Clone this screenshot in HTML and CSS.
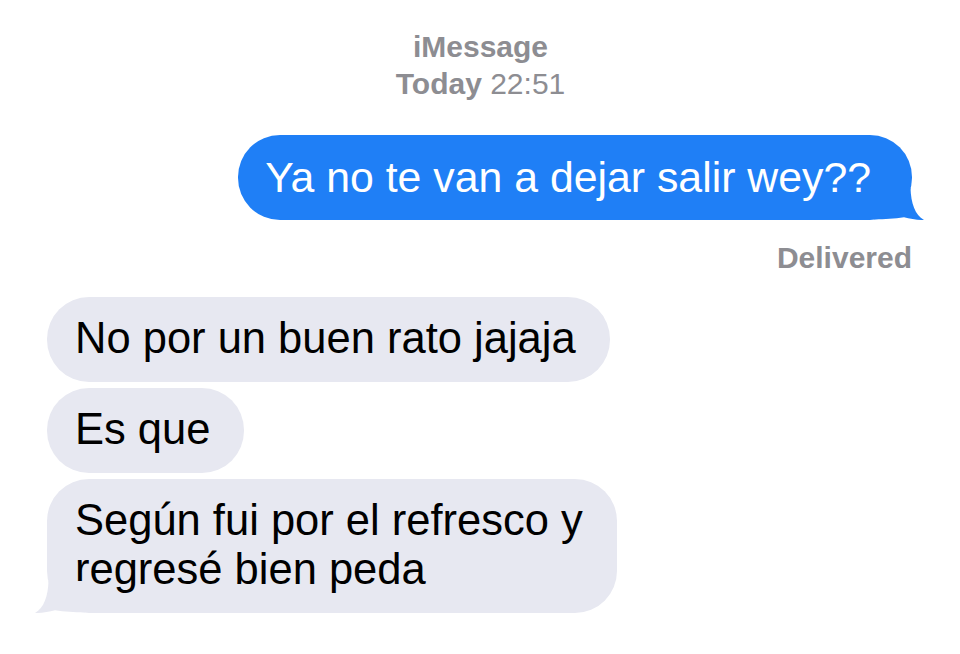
FILE: index.html
```html
<!DOCTYPE html>
<html lang="es">
<head>
<meta charset="utf-8">
<title>iMessage</title>
<link rel="stylesheet" href="styles.css">
</head>
<body>
<main class="thread">
  <header class="meta">
    <div class="service">iMessage</div>
    <div class="stamp"><span class="day">Today</span> 22:51</div>
  </header>
  <div class="bubble sent">Ya no te van a dejar salir wey??<svg class="tail tail-sent" viewBox="0 0 50 32" width="50" height="32" aria-hidden="true"><path d="M36.5,0 C37,15 41,27 50,32 C44,32.2 36,30.8 30,29.2 C20,30.6 9,31.4 0,31.3 L0,0 Z"/></svg></div>
  <div class="delivered">Delivered</div>
  <div class="received-group">
    <div class="bubble received">No por un buen rato jajaja</div>
    <div class="bubble received">Es que</div>
    <div class="bubble received">Según fui por el refresco y<br>regresé bien peda<svg class="tail tail-received" viewBox="0 0 50 32" width="50" height="32" aria-hidden="true"><path d="M36.5,0 C37,15 41,27 50,32 C44,32.2 36,30.8 30,29.2 C20,30.6 9,31.4 0,31.3 L0,0 Z"/></svg></div>
  </div>
</main>
</body>
</html>
```
FILE: styles.css
```css
html, body {
  margin: 0;
  padding: 0;
  background: #ffffff;
}
body {
  font-family: "Liberation Sans", Arial, Helvetica, sans-serif;
}
.thread {
  display: flex;
  flex-direction: column;
  padding: 28px 48px 0 47px;
}
.meta {
  text-align: center;
  color: #8d8d92;
  font-size: 30px;
  line-height: 37px;
  font-weight: 700;
  padding-left: 2px;
}
.stamp {
  font-weight: 400;
}
.stamp .day {
  font-weight: 700;
}
.bubble {
  position: relative;
  font-size: 43.5px;
  line-height: 49px;
  border-radius: 42px;
  padding: 18px 34px 18px 28px;
}
.sent {
  align-self: flex-end;
  margin-top: 33px;
  background: #1f7ff6;
  color: #ffffff;
  font-size: 42.8px;
  padding-left: 27px;
  padding-right: 41px;
}
.delivered {
  align-self: flex-end;
  margin-top: 19px;
  color: #8d8d92;
  font-size: 30px;
  line-height: 37px;
  font-weight: 700;
}
.received-group {
  display: flex;
  flex-direction: column;
  align-items: flex-start;
  gap: 6px;
  margin-top: 21px;
}
.received {
  background: #e7e8f1;
  color: #000000;
  padding-top: 17px;
  padding-bottom: 19px;
}
.tail {
  position: absolute;
  bottom: 0;
  display: block;
}
.tail-sent {
  right: -12px;
  fill: #1f7ff6;
}
.tail-received {
  left: -12px;
  fill: #e7e8f1;
  transform: scaleX(-1);
}
```
